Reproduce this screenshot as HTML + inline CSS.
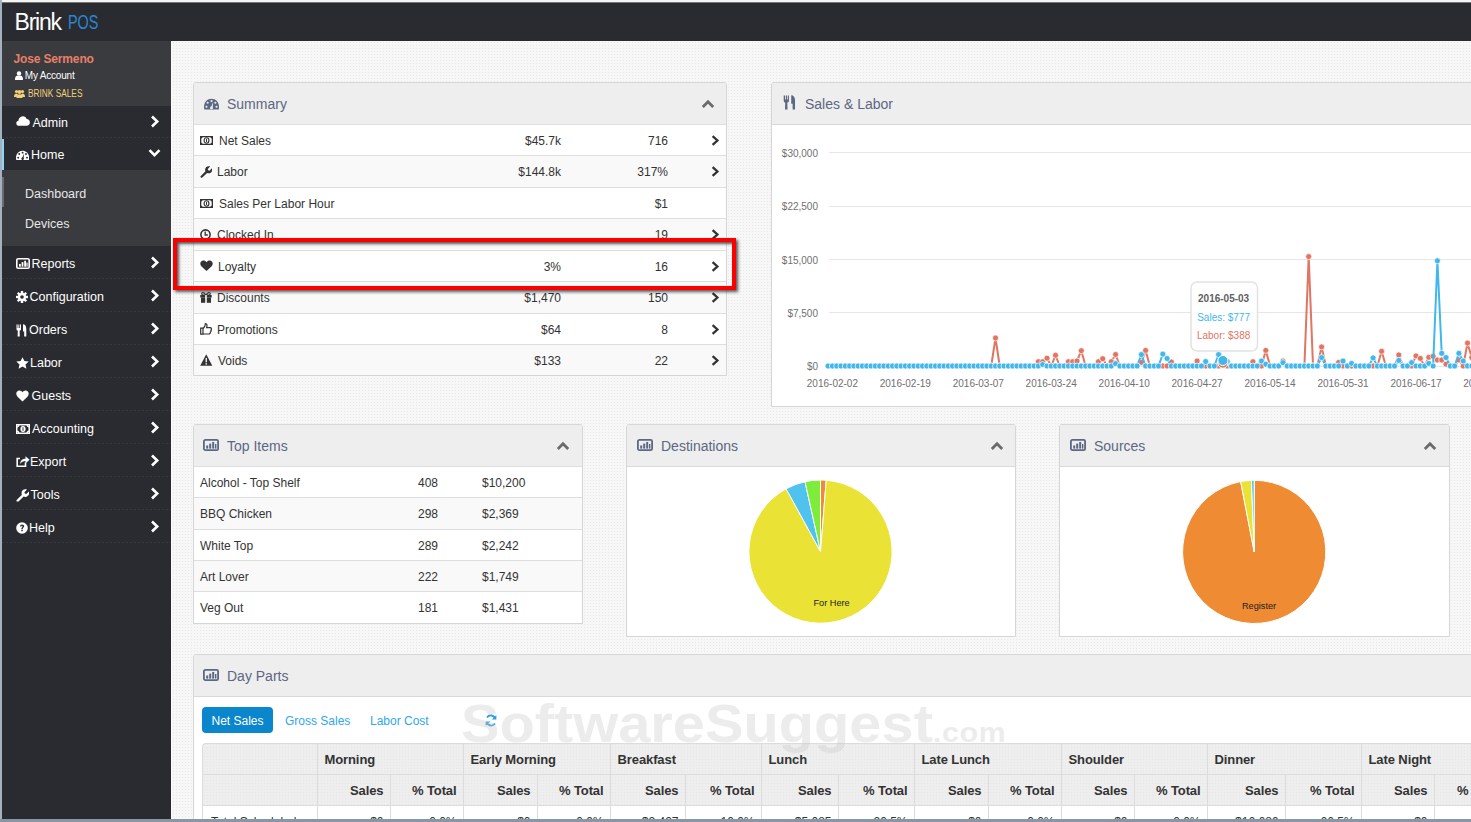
<!DOCTYPE html>
<html><head><meta charset="utf-8">
<style>
*{box-sizing:border-box;margin:0;padding:0}
html,body{width:1471px;height:822px;overflow:hidden}
body{position:relative;background:#f3f3f3;font-family:"Liberation Sans",sans-serif;color:#333}
.abs{position:absolute}
#topstrip{left:0;top:0;width:1471px;height:3px;background:#f4f4f4;border-bottom:1px solid #777}
#leftstrip{left:0;top:0;width:2px;height:822px;background:#a4b1bf}
#botstrip{left:0;top:819px;width:1471px;height:3px;background:#8797a6}
#header{left:2px;top:3px;width:1469px;height:38px;background:#2a2b30}
#content{left:171px;top:41px;width:1300px;height:779px;background-color:#f7f7f7;
 background-image:radial-gradient(#e8e8e8 0.6px,transparent 0.8px);background-size:3px 3px;border-left:1px solid #fafafa}
#sidebar{left:2px;top:41px;width:169px;height:779px;background:#2a2b30}
#user{left:0;top:0;width:169px;height:65px;background:#3a3b3f}
.logo1{left:12.5px;top:4.5px;font-size:23px;color:#fff;letter-spacing:-1.2px;line-height:28px}
.logo2{left:65.5px;top:8px;font-size:19.5px;color:#2a86d1;line-height:22px;transform:scaleX(0.74);transform-origin:0 0}
.menu{position:absolute;left:0;width:169px;height:33px;color:#fff;font-size:12.5px;
 background-image:linear-gradient(90deg,#38393e 50%,transparent 50%);background-size:4px 1px;background-repeat:repeat-x;background-position:0 100%}
.menu .t{position:absolute;top:10px;line-height:16px;white-space:nowrap}
.menu svg.ic{position:absolute;left:14px}
.menu svg.chev{position:absolute;left:147px;top:10px}
.sub{position:absolute;left:0;top:129px;width:169px;height:76px;background:#3a3b3f}
.sub .t{position:absolute;left:23px;color:#e8e8e8;font-size:12.5px;line-height:16px}

.panel{position:absolute;background:#fff;border:1px solid #d6d6d6;border-radius:3px 3px 0 0}
.ph{position:absolute;left:0;top:0;right:0;height:42px;background:#eeeeee;border-bottom:1px solid #d9d9d9;border-radius:2px 2px 0 0}
.ph .ttl{position:absolute;top:13px;font-size:14px;color:#5c6783;line-height:16px;white-space:nowrap}
.ph svg{position:absolute}
.row{position:absolute;left:0;right:0;border-top:1px solid #dedede;font-size:12px;color:#333;line-height:14px;white-space:nowrap}
.row.alt{background:#f9f9f9}
.row .l{position:absolute}
.row .v1{position:absolute;right:165px;text-align:right}
.row .v2{position:absolute;right:58px;text-align:right}
.row svg{position:absolute}

.dph{background-color:#eeeeee;background-image:radial-gradient(#e6e6e6 0.6px,transparent 0.8px);background-size:3px 3px}
.dpt{font-size:13px;letter-spacing:-0.1px;font-weight:bold;color:#333;line-height:15px;white-space:nowrap}
.dpd{font-size:12px;color:#333;line-height:15px;white-space:nowrap}
.btn{position:absolute;left:202px;top:707px;width:71px;height:26px;background:#0a86cd;border-radius:4px;color:#fff;font-size:12px;line-height:29px;text-align:center}
.lnk{position:absolute;top:713.5px;font-size:12px;color:#2fa7ec;line-height:15px;white-space:nowrap}
.wm{position:absolute;left:461px;top:694px;font-size:53px;font-weight:bold;color:rgba(200,200,200,0.35);line-height:60px;white-space:nowrap;transform:scaleX(1.09);transform-origin:0 0}
</style></head>
<body>
<div id="topstrip" class="abs"></div>
<div id="header" class="abs">
  <div class="abs logo1">Brink</div>
  <div class="abs logo2">POS</div>
</div>
<div id="content" class="abs"></div>
<div class="panel" style="left:193px;top:82px;width:534px;height:294px">
<div class="ph"><svg style="left:10px;top:15px" width="15" height="12" viewBox="0 0 14 11"><path d="M0.3 10.6 C0.1 10 0 9.2 0 8.3 C0 4 3.1 0.7 7 0.7 C10.9 0.7 14 4 14 8.3 C14 9.2 13.9 10 13.7 10.6 Z" fill="#5c6783"/><circle cx="2.3" cy="8.1" r="1" fill="#eee"/><circle cx="3.4" cy="4.3" r="1" fill="#eee"/><circle cx="7" cy="2.8" r="1" fill="#eee"/><circle cx="10.6" cy="4.3" r="1" fill="#eee"/><circle cx="11.7" cy="8.1" r="1" fill="#eee"/><path d="M6 9.4 L8.6 3.6 L8 9.4 Z" fill="#eee"/><circle cx="7" cy="9.2" r="1.3" fill="#eee"/></svg><span class="ttl" style="left:33px">Summary</span><svg style="left:507px;top:16px" width="14" height="10" viewBox="0 0 14 10"><path d="M1.8 8 L7 2.8 L12.2 8" stroke="#6b6b6b" stroke-width="2.8" fill="none"/></svg></div>
<div class="row" style="top:41.0px;height:31.4px"><svg style="left:6px;top:11px" width="13" height="9" viewBox="0 0 14 10" preserveAspectRatio="none"><rect x="0.7" y="0.7" width="12.6" height="8.6" fill="none" stroke="#333" stroke-width="1.4"/><path d="M0.7 2.8 A2.1 2.1 0 0 0 2.8 0.7 L0.7 0.7Z M11.2 0.7 A2.1 2.1 0 0 0 13.3 2.8 L13.3 0.7Z M13.3 7.2 A2.1 2.1 0 0 0 11.2 9.3 L13.3 9.3Z M2.8 9.3 A2.1 2.1 0 0 0 0.7 7.2 L0.7 9.3Z" fill="#333"/><ellipse cx="7" cy="5" rx="2.6" ry="3" fill="none" stroke="#333" stroke-width="1.2"/><rect x="6.5" y="3.3" width="1.1" height="3.4" fill="#333"/></svg><span class="l" style="left:25px;top:9px">Net Sales</span><span class="v1" style="top:9px">$45.7k</span><span class="v2" style="top:9px">716</span><svg style="left:517px;top:10px" width="9" height="11" viewBox="0 0 9 11"><path d="M1.6 1.2 L6.4 5.5 L1.6 9.8" stroke="#333" stroke-width="2.3" fill="none"/></svg></div>
<div class="row alt" style="top:72.4px;height:31.6px"><svg style="left:6px;top:10px" width="12" height="12" viewBox="0 0 13 13"><path d="M1.3 12.6 C0.8 12.6 0.4 12.2 0.4 11.7 C0.4 11.4 0.5 11.2 0.7 11 L5.9 5.8 C5.6 5.2 5.5 4.6 5.5 4 C5.5 1.9 7.2 0.2 9.3 0.2 C9.9 0.2 10.5 0.4 11 0.6 L8.4 3.2 L8.9 4.6 L10.3 5.1 L12.9 2.5 C13.1 3 13.2 3.5 13.2 4.1 C13.2 6.2 11.5 7.9 9.4 7.9 C8.8 7.9 8.2 7.8 7.7 7.5 L2.5 12.5 C2.3 12.7 2 12.6 1.3 12.6 Z" fill="#333"/></svg><span class="l" style="left:23px;top:9px">Labor</span><span class="v1" style="top:9px">$144.8k</span><span class="v2" style="top:9px">317%</span><svg style="left:517px;top:10px" width="9" height="11" viewBox="0 0 9 11"><path d="M1.6 1.2 L6.4 5.5 L1.6 9.8" stroke="#333" stroke-width="2.3" fill="none"/></svg></div>
<div class="row" style="top:104.0px;height:31.2px"><svg style="left:6px;top:11px" width="13" height="9" viewBox="0 0 14 10" preserveAspectRatio="none"><rect x="0.7" y="0.7" width="12.6" height="8.6" fill="none" stroke="#333" stroke-width="1.4"/><path d="M0.7 2.8 A2.1 2.1 0 0 0 2.8 0.7 L0.7 0.7Z M11.2 0.7 A2.1 2.1 0 0 0 13.3 2.8 L13.3 0.7Z M13.3 7.2 A2.1 2.1 0 0 0 11.2 9.3 L13.3 9.3Z M2.8 9.3 A2.1 2.1 0 0 0 0.7 7.2 L0.7 9.3Z" fill="#333"/><ellipse cx="7" cy="5" rx="2.6" ry="3" fill="none" stroke="#333" stroke-width="1.2"/><rect x="6.5" y="3.3" width="1.1" height="3.4" fill="#333"/></svg><span class="l" style="left:25px;top:9px">Sales Per Labor Hour</span><span class="v1" style="top:9px"></span><span class="v2" style="top:9px">$1</span></div>
<div class="row alt" style="top:135.2px;height:31.3px"><svg style="left:6px;top:10px" width="11" height="11" viewBox="0 0 11 11"><circle cx="5.5" cy="5.5" r="4.6" fill="none" stroke="#333" stroke-width="1.6"/><path d="M5.2 2.6 L5.2 6 L7.8 6" fill="none" stroke="#333" stroke-width="1.3"/></svg><span class="l" style="left:23px;top:9px">Clocked In</span><span class="v1" style="top:9px"></span><span class="v2" style="top:9px">19</span><svg style="left:517px;top:10px" width="9" height="11" viewBox="0 0 9 11"><path d="M1.6 1.2 L6.4 5.5 L1.6 9.8" stroke="#333" stroke-width="2.3" fill="none"/></svg></div>
<div class="row" style="top:166.5px;height:31.5px"><svg style="left:5.5px;top:9.5px" width="13" height="11.5" viewBox="0 0 13 12" preserveAspectRatio="none"><path d="M6.5 11.5 L1.3 6.4 C-0.3 4.8 0 1.6 2.3 0.8 C4 0.2 5.6 1 6.5 2.3 C7.4 1 9 0.2 10.7 0.8 C13 1.6 13.3 4.8 11.7 6.4 Z" fill="#333"/></svg><span class="l" style="left:24px;top:9px">Loyalty</span><span class="v1" style="top:9px">3%</span><span class="v2" style="top:9px">16</span><svg style="left:517px;top:10px" width="9" height="11" viewBox="0 0 9 11"><path d="M1.6 1.2 L6.4 5.5 L1.6 9.8" stroke="#333" stroke-width="2.3" fill="none"/></svg></div>
<div class="row alt" style="top:198.0px;height:31.5px"><svg style="left:6px;top:10px" width="12" height="11" viewBox="0 0 12 11"><path d="M3 3 C1.5 3 1.2 1 2.6 0.7 C4 0.4 5.3 1.8 6 3 C6.7 1.8 8 0.4 9.4 0.7 C10.8 1 10.5 3 9 3Z" fill="none" stroke="#333" stroke-width="1.1"/><rect x="0.3" y="3" width="11.4" height="2.6" fill="#333"/><rect x="1" y="5.6" width="10" height="5.2" fill="#333"/><rect x="5.2" y="3" width="1.6" height="8" fill="#f9f9f9"/></svg><span class="l" style="left:23px;top:9px">Discounts</span><span class="v1" style="top:9px">$1,470</span><span class="v2" style="top:9px">150</span><svg style="left:517px;top:10px" width="9" height="11" viewBox="0 0 9 11"><path d="M1.6 1.2 L6.4 5.5 L1.6 9.8" stroke="#333" stroke-width="2.3" fill="none"/></svg></div>
<div class="row" style="top:229.5px;height:31.0px"><svg style="left:6px;top:9px" width="12" height="12" viewBox="0 0 12 12"><path d="M0.7 5.2 L3 5.2 L3 11.2 L0.7 11.2Z" fill="none" stroke="#333" stroke-width="1.2"/><path d="M3 5.4 C4.5 4.3 5.3 2.7 5.4 0.7 C7 0.7 7.4 2.3 6.6 4.6 L10.3 4.6 C11.2 4.6 11.6 5.4 11.2 6.1 C11.6 6.6 11.4 7.4 10.9 7.7 C11.1 8.3 10.8 9 10.3 9.2 C10.4 10 9.9 11 9 11 L3 11" fill="none" stroke="#333" stroke-width="1.2"/></svg><span class="l" style="left:23px;top:9px">Promotions</span><span class="v1" style="top:9px">$64</span><span class="v2" style="top:9px">8</span><svg style="left:517px;top:10px" width="9" height="11" viewBox="0 0 9 11"><path d="M1.6 1.2 L6.4 5.5 L1.6 9.8" stroke="#333" stroke-width="2.3" fill="none"/></svg></div>
<div class="row alt" style="top:260.5px;height:31.5px"><svg style="left:6px;top:9px" width="12.5" height="12" viewBox="0 0 13 11" preserveAspectRatio="none"><path d="M6.5 0.3 L12.8 10.8 L0.2 10.8Z" fill="#333"/><rect x="5.8" y="3.6" width="1.4" height="4" fill="#f9f9f9"/><rect x="5.8" y="8.4" width="1.4" height="1.4" fill="#f9f9f9"/></svg><span class="l" style="left:24px;top:9px">Voids</span><span class="v1" style="top:9px">$133</span><span class="v2" style="top:9px">22</span><svg style="left:517px;top:10px" width="9" height="11" viewBox="0 0 9 11"><path d="M1.6 1.2 L6.4 5.5 L1.6 9.8" stroke="#333" stroke-width="2.3" fill="none"/></svg></div>
</div>

<div class="panel" style="left:771px;top:82px;width:720px;height:325px">
<div class="ph"><svg style="left:11px;top:12px" width="13" height="15" viewBox="0 0 11 13"><path d="M0.5 0.5 L1.6 0.5 L1.6 4 L2.3 4 L2.3 0.5 L3.3 0.5 L3.3 4 L4 4 L4 0.5 L5 0.5 L5 5.2 C5 6 4.4 6.4 3.6 6.6 L3.8 12.5 L1.6 12.5 L1.8 6.6 C1 6.4 0.5 6 0.5 5.2 Z" fill="#5c6783"/><path d="M7 0.3 C9 0.3 10.3 2 10.3 5 L10.3 12.5 L8.2 12.5 L8.2 7.6 L7 7.6 Z" fill="#5c6783"/></svg><span class="ttl" style="left:33px">Sales &amp; Labor</span></div></div>
<svg class="abs" style="left:772px;top:125px" width="699" height="281" viewBox="772 125 699 281">
<line x1="829" y1="366.5" x2="1471" y2="366.5" stroke="#e6e6e6" stroke-width="1"/>
<text x="818" y="370.4" text-anchor="end" font-size="10" fill="#707070">$0</text>
<line x1="829" y1="312.5" x2="1471" y2="312.5" stroke="#e6e6e6" stroke-width="1"/>
<text x="818" y="317.1" text-anchor="end" font-size="10" fill="#707070">$7,500</text>
<line x1="829" y1="259.5" x2="1471" y2="259.5" stroke="#e6e6e6" stroke-width="1"/>
<text x="818" y="263.7" text-anchor="end" font-size="10" fill="#707070">$15,000</text>
<line x1="829" y1="206.5" x2="1471" y2="206.5" stroke="#e6e6e6" stroke-width="1"/>
<text x="818" y="210.4" text-anchor="end" font-size="10" fill="#707070">$22,500</text>
<line x1="829" y1="152.5" x2="1471" y2="152.5" stroke="#e6e6e6" stroke-width="1"/>
<text x="818" y="157.1" text-anchor="end" font-size="10" fill="#707070">$30,000</text>
<text x="832.4" y="386.9" text-anchor="middle" font-size="10" fill="#707070">2016-02-02</text>
<text x="905.3" y="386.9" text-anchor="middle" font-size="10" fill="#707070">2016-02-19</text>
<text x="978.3" y="386.9" text-anchor="middle" font-size="10" fill="#707070">2016-03-07</text>
<text x="1051.2" y="386.9" text-anchor="middle" font-size="10" fill="#707070">2016-03-24</text>
<text x="1124.2" y="386.9" text-anchor="middle" font-size="10" fill="#707070">2016-04-10</text>
<text x="1197.1" y="386.9" text-anchor="middle" font-size="10" fill="#707070">2016-04-27</text>
<text x="1270.1" y="386.9" text-anchor="middle" font-size="10" fill="#707070">2016-05-14</text>
<text x="1343.0" y="386.9" text-anchor="middle" font-size="10" fill="#707070">2016-05-31</text>
<text x="1416.0" y="386.9" text-anchor="middle" font-size="10" fill="#707070">2016-06-17</text>
<text x="1488.9" y="386.9" text-anchor="middle" font-size="10" fill="#707070">2016-07-04</text>
<path d="M828.1 366.0 L832.4 366.0 L836.7 366.0 L841.0 366.0 L845.3 366.0 L849.6 366.0 L853.9 366.0 L858.1 366.0 L862.4 366.0 L866.7 366.0 L871.0 366.0 L875.3 366.0 L879.6 366.0 L883.9 366.0 L888.2 366.0 L892.5 366.0 L896.8 366.0 L901.1 366.0 L905.3 366.0 L909.6 366.0 L913.9 366.0 L918.2 366.0 L922.5 366.0 L926.8 366.0 L931.1 366.0 L935.4 366.0 L939.7 366.0 L944.0 366.0 L948.3 366.0 L952.5 366.0 L956.8 366.0 L961.1 366.0 L965.4 366.0 L969.7 366.0 L974.0 366.0 L978.3 366.0 L982.6 366.0 L986.9 366.0 L991.2 366.0 L995.5 338.0 L999.7 366.0 L1004.0 366.0 L1008.3 366.0 L1012.6 366.0 L1016.9 366.0 L1021.2 366.0 L1025.5 366.0 L1029.8 366.0 L1034.1 366.0 L1038.4 361.7 L1042.7 361.7 L1047.0 358.2 L1051.2 366.0 L1055.5 355.3 L1059.8 366.0 L1064.1 366.0 L1068.4 361.7 L1072.7 361.7 L1077.0 361.0 L1081.3 350.7 L1085.6 366.0 L1089.9 366.0 L1094.2 366.0 L1098.4 361.7 L1102.7 358.7 L1107.0 366.0 L1111.3 361.7 L1115.6 354.5 L1119.9 366.0 L1124.2 366.0 L1128.5 366.0 L1132.8 366.0 L1137.1 366.0 L1141.4 362.4 L1145.6 350.4 L1149.9 366.0 L1154.2 366.0 L1158.5 366.0 L1162.8 366.0 L1167.1 366.0 L1171.4 362.0 L1175.7 366.0 L1180.0 366.0 L1184.3 366.0 L1188.6 366.0 L1192.8 366.0 L1197.1 361.0 L1201.4 366.0 L1205.7 366.0 L1210.0 366.0 L1214.3 366.0 L1218.6 366.0 L1222.9 363.2 L1227.2 366.0 L1231.5 366.0 L1235.8 366.0 L1240.0 366.0 L1244.3 366.0 L1248.6 366.0 L1252.9 361.7 L1257.2 366.0 L1261.5 366.0 L1265.8 350.4 L1270.1 366.0 L1274.4 366.0 L1278.7 366.0 L1283.0 361.0 L1287.2 366.0 L1291.5 366.0 L1295.8 366.0 L1300.1 366.0 L1304.4 366.0 L1308.7 256.6 L1313.0 366.0 L1317.3 366.0 L1321.6 346.9 L1325.9 366.0 L1330.2 366.0 L1334.4 366.0 L1338.7 362.4 L1343.0 366.0 L1347.3 366.0 L1351.6 366.0 L1355.9 366.0 L1360.2 366.0 L1364.5 366.0 L1368.8 366.0 L1373.1 366.0 L1377.4 366.0 L1381.6 351.3 L1385.9 366.0 L1390.2 366.0 L1394.5 366.0 L1398.8 354.9 L1403.1 366.0 L1407.4 366.0 L1411.7 366.0 L1416.0 355.9 L1420.3 358.4 L1424.6 366.0 L1428.8 357.3 L1433.1 356.3 L1437.4 360.0 L1441.7 360.0 L1446.0 364.2 L1450.3 366.0 L1454.6 366.0 L1458.9 360.0 L1463.2 366.0 L1467.5 343.1 L1471.8 357.5 L1476.1 366.0 L1480.3 366.0" fill="none" stroke="#e07561" stroke-width="2" stroke-linejoin="round"/>
<circle cx="828.1" cy="366.0" r="3" fill="#e07561" stroke="#fff" stroke-width="0.7"/>
<circle cx="832.4" cy="366.0" r="3" fill="#e07561" stroke="#fff" stroke-width="0.7"/>
<circle cx="836.7" cy="366.0" r="3" fill="#e07561" stroke="#fff" stroke-width="0.7"/>
<circle cx="841.0" cy="366.0" r="3" fill="#e07561" stroke="#fff" stroke-width="0.7"/>
<circle cx="845.3" cy="366.0" r="3" fill="#e07561" stroke="#fff" stroke-width="0.7"/>
<circle cx="849.6" cy="366.0" r="3" fill="#e07561" stroke="#fff" stroke-width="0.7"/>
<circle cx="853.9" cy="366.0" r="3" fill="#e07561" stroke="#fff" stroke-width="0.7"/>
<circle cx="858.1" cy="366.0" r="3" fill="#e07561" stroke="#fff" stroke-width="0.7"/>
<circle cx="862.4" cy="366.0" r="3" fill="#e07561" stroke="#fff" stroke-width="0.7"/>
<circle cx="866.7" cy="366.0" r="3" fill="#e07561" stroke="#fff" stroke-width="0.7"/>
<circle cx="871.0" cy="366.0" r="3" fill="#e07561" stroke="#fff" stroke-width="0.7"/>
<circle cx="875.3" cy="366.0" r="3" fill="#e07561" stroke="#fff" stroke-width="0.7"/>
<circle cx="879.6" cy="366.0" r="3" fill="#e07561" stroke="#fff" stroke-width="0.7"/>
<circle cx="883.9" cy="366.0" r="3" fill="#e07561" stroke="#fff" stroke-width="0.7"/>
<circle cx="888.2" cy="366.0" r="3" fill="#e07561" stroke="#fff" stroke-width="0.7"/>
<circle cx="892.5" cy="366.0" r="3" fill="#e07561" stroke="#fff" stroke-width="0.7"/>
<circle cx="896.8" cy="366.0" r="3" fill="#e07561" stroke="#fff" stroke-width="0.7"/>
<circle cx="901.1" cy="366.0" r="3" fill="#e07561" stroke="#fff" stroke-width="0.7"/>
<circle cx="905.3" cy="366.0" r="3" fill="#e07561" stroke="#fff" stroke-width="0.7"/>
<circle cx="909.6" cy="366.0" r="3" fill="#e07561" stroke="#fff" stroke-width="0.7"/>
<circle cx="913.9" cy="366.0" r="3" fill="#e07561" stroke="#fff" stroke-width="0.7"/>
<circle cx="918.2" cy="366.0" r="3" fill="#e07561" stroke="#fff" stroke-width="0.7"/>
<circle cx="922.5" cy="366.0" r="3" fill="#e07561" stroke="#fff" stroke-width="0.7"/>
<circle cx="926.8" cy="366.0" r="3" fill="#e07561" stroke="#fff" stroke-width="0.7"/>
<circle cx="931.1" cy="366.0" r="3" fill="#e07561" stroke="#fff" stroke-width="0.7"/>
<circle cx="935.4" cy="366.0" r="3" fill="#e07561" stroke="#fff" stroke-width="0.7"/>
<circle cx="939.7" cy="366.0" r="3" fill="#e07561" stroke="#fff" stroke-width="0.7"/>
<circle cx="944.0" cy="366.0" r="3" fill="#e07561" stroke="#fff" stroke-width="0.7"/>
<circle cx="948.3" cy="366.0" r="3" fill="#e07561" stroke="#fff" stroke-width="0.7"/>
<circle cx="952.5" cy="366.0" r="3" fill="#e07561" stroke="#fff" stroke-width="0.7"/>
<circle cx="956.8" cy="366.0" r="3" fill="#e07561" stroke="#fff" stroke-width="0.7"/>
<circle cx="961.1" cy="366.0" r="3" fill="#e07561" stroke="#fff" stroke-width="0.7"/>
<circle cx="965.4" cy="366.0" r="3" fill="#e07561" stroke="#fff" stroke-width="0.7"/>
<circle cx="969.7" cy="366.0" r="3" fill="#e07561" stroke="#fff" stroke-width="0.7"/>
<circle cx="974.0" cy="366.0" r="3" fill="#e07561" stroke="#fff" stroke-width="0.7"/>
<circle cx="978.3" cy="366.0" r="3" fill="#e07561" stroke="#fff" stroke-width="0.7"/>
<circle cx="982.6" cy="366.0" r="3" fill="#e07561" stroke="#fff" stroke-width="0.7"/>
<circle cx="986.9" cy="366.0" r="3" fill="#e07561" stroke="#fff" stroke-width="0.7"/>
<circle cx="991.2" cy="366.0" r="3" fill="#e07561" stroke="#fff" stroke-width="0.7"/>
<circle cx="995.5" cy="338.0" r="3" fill="#e07561" stroke="#fff" stroke-width="0.7"/>
<circle cx="999.7" cy="366.0" r="3" fill="#e07561" stroke="#fff" stroke-width="0.7"/>
<circle cx="1004.0" cy="366.0" r="3" fill="#e07561" stroke="#fff" stroke-width="0.7"/>
<circle cx="1008.3" cy="366.0" r="3" fill="#e07561" stroke="#fff" stroke-width="0.7"/>
<circle cx="1012.6" cy="366.0" r="3" fill="#e07561" stroke="#fff" stroke-width="0.7"/>
<circle cx="1016.9" cy="366.0" r="3" fill="#e07561" stroke="#fff" stroke-width="0.7"/>
<circle cx="1021.2" cy="366.0" r="3" fill="#e07561" stroke="#fff" stroke-width="0.7"/>
<circle cx="1025.5" cy="366.0" r="3" fill="#e07561" stroke="#fff" stroke-width="0.7"/>
<circle cx="1029.8" cy="366.0" r="3" fill="#e07561" stroke="#fff" stroke-width="0.7"/>
<circle cx="1034.1" cy="366.0" r="3" fill="#e07561" stroke="#fff" stroke-width="0.7"/>
<circle cx="1038.4" cy="361.7" r="3" fill="#e07561" stroke="#fff" stroke-width="0.7"/>
<circle cx="1042.7" cy="361.7" r="3" fill="#e07561" stroke="#fff" stroke-width="0.7"/>
<circle cx="1047.0" cy="358.2" r="3" fill="#e07561" stroke="#fff" stroke-width="0.7"/>
<circle cx="1051.2" cy="366.0" r="3" fill="#e07561" stroke="#fff" stroke-width="0.7"/>
<circle cx="1055.5" cy="355.3" r="3" fill="#e07561" stroke="#fff" stroke-width="0.7"/>
<circle cx="1059.8" cy="366.0" r="3" fill="#e07561" stroke="#fff" stroke-width="0.7"/>
<circle cx="1064.1" cy="366.0" r="3" fill="#e07561" stroke="#fff" stroke-width="0.7"/>
<circle cx="1068.4" cy="361.7" r="3" fill="#e07561" stroke="#fff" stroke-width="0.7"/>
<circle cx="1072.7" cy="361.7" r="3" fill="#e07561" stroke="#fff" stroke-width="0.7"/>
<circle cx="1077.0" cy="361.0" r="3" fill="#e07561" stroke="#fff" stroke-width="0.7"/>
<circle cx="1081.3" cy="350.7" r="3" fill="#e07561" stroke="#fff" stroke-width="0.7"/>
<circle cx="1085.6" cy="366.0" r="3" fill="#e07561" stroke="#fff" stroke-width="0.7"/>
<circle cx="1089.9" cy="366.0" r="3" fill="#e07561" stroke="#fff" stroke-width="0.7"/>
<circle cx="1094.2" cy="366.0" r="3" fill="#e07561" stroke="#fff" stroke-width="0.7"/>
<circle cx="1098.4" cy="361.7" r="3" fill="#e07561" stroke="#fff" stroke-width="0.7"/>
<circle cx="1102.7" cy="358.7" r="3" fill="#e07561" stroke="#fff" stroke-width="0.7"/>
<circle cx="1107.0" cy="366.0" r="3" fill="#e07561" stroke="#fff" stroke-width="0.7"/>
<circle cx="1111.3" cy="361.7" r="3" fill="#e07561" stroke="#fff" stroke-width="0.7"/>
<circle cx="1115.6" cy="354.5" r="3" fill="#e07561" stroke="#fff" stroke-width="0.7"/>
<circle cx="1119.9" cy="366.0" r="3" fill="#e07561" stroke="#fff" stroke-width="0.7"/>
<circle cx="1124.2" cy="366.0" r="3" fill="#e07561" stroke="#fff" stroke-width="0.7"/>
<circle cx="1128.5" cy="366.0" r="3" fill="#e07561" stroke="#fff" stroke-width="0.7"/>
<circle cx="1132.8" cy="366.0" r="3" fill="#e07561" stroke="#fff" stroke-width="0.7"/>
<circle cx="1137.1" cy="366.0" r="3" fill="#e07561" stroke="#fff" stroke-width="0.7"/>
<circle cx="1141.4" cy="362.4" r="3" fill="#e07561" stroke="#fff" stroke-width="0.7"/>
<circle cx="1145.6" cy="350.4" r="3" fill="#e07561" stroke="#fff" stroke-width="0.7"/>
<circle cx="1149.9" cy="366.0" r="3" fill="#e07561" stroke="#fff" stroke-width="0.7"/>
<circle cx="1154.2" cy="366.0" r="3" fill="#e07561" stroke="#fff" stroke-width="0.7"/>
<circle cx="1158.5" cy="366.0" r="3" fill="#e07561" stroke="#fff" stroke-width="0.7"/>
<circle cx="1162.8" cy="366.0" r="3" fill="#e07561" stroke="#fff" stroke-width="0.7"/>
<circle cx="1167.1" cy="366.0" r="3" fill="#e07561" stroke="#fff" stroke-width="0.7"/>
<circle cx="1171.4" cy="362.0" r="3" fill="#e07561" stroke="#fff" stroke-width="0.7"/>
<circle cx="1175.7" cy="366.0" r="3" fill="#e07561" stroke="#fff" stroke-width="0.7"/>
<circle cx="1180.0" cy="366.0" r="3" fill="#e07561" stroke="#fff" stroke-width="0.7"/>
<circle cx="1184.3" cy="366.0" r="3" fill="#e07561" stroke="#fff" stroke-width="0.7"/>
<circle cx="1188.6" cy="366.0" r="3" fill="#e07561" stroke="#fff" stroke-width="0.7"/>
<circle cx="1192.8" cy="366.0" r="3" fill="#e07561" stroke="#fff" stroke-width="0.7"/>
<circle cx="1197.1" cy="361.0" r="3" fill="#e07561" stroke="#fff" stroke-width="0.7"/>
<circle cx="1201.4" cy="366.0" r="3" fill="#e07561" stroke="#fff" stroke-width="0.7"/>
<circle cx="1205.7" cy="366.0" r="3" fill="#e07561" stroke="#fff" stroke-width="0.7"/>
<circle cx="1210.0" cy="366.0" r="3" fill="#e07561" stroke="#fff" stroke-width="0.7"/>
<circle cx="1214.3" cy="366.0" r="3" fill="#e07561" stroke="#fff" stroke-width="0.7"/>
<circle cx="1218.6" cy="366.0" r="3" fill="#e07561" stroke="#fff" stroke-width="0.7"/>
<circle cx="1222.9" cy="363.2" r="3" fill="#e07561" stroke="#fff" stroke-width="0.7"/>
<circle cx="1227.2" cy="366.0" r="3" fill="#e07561" stroke="#fff" stroke-width="0.7"/>
<circle cx="1231.5" cy="366.0" r="3" fill="#e07561" stroke="#fff" stroke-width="0.7"/>
<circle cx="1235.8" cy="366.0" r="3" fill="#e07561" stroke="#fff" stroke-width="0.7"/>
<circle cx="1240.0" cy="366.0" r="3" fill="#e07561" stroke="#fff" stroke-width="0.7"/>
<circle cx="1244.3" cy="366.0" r="3" fill="#e07561" stroke="#fff" stroke-width="0.7"/>
<circle cx="1248.6" cy="366.0" r="3" fill="#e07561" stroke="#fff" stroke-width="0.7"/>
<circle cx="1252.9" cy="361.7" r="3" fill="#e07561" stroke="#fff" stroke-width="0.7"/>
<circle cx="1257.2" cy="366.0" r="3" fill="#e07561" stroke="#fff" stroke-width="0.7"/>
<circle cx="1261.5" cy="366.0" r="3" fill="#e07561" stroke="#fff" stroke-width="0.7"/>
<circle cx="1265.8" cy="350.4" r="3" fill="#e07561" stroke="#fff" stroke-width="0.7"/>
<circle cx="1270.1" cy="366.0" r="3" fill="#e07561" stroke="#fff" stroke-width="0.7"/>
<circle cx="1274.4" cy="366.0" r="3" fill="#e07561" stroke="#fff" stroke-width="0.7"/>
<circle cx="1278.7" cy="366.0" r="3" fill="#e07561" stroke="#fff" stroke-width="0.7"/>
<circle cx="1283.0" cy="361.0" r="3" fill="#e07561" stroke="#fff" stroke-width="0.7"/>
<circle cx="1287.2" cy="366.0" r="3" fill="#e07561" stroke="#fff" stroke-width="0.7"/>
<circle cx="1291.5" cy="366.0" r="3" fill="#e07561" stroke="#fff" stroke-width="0.7"/>
<circle cx="1295.8" cy="366.0" r="3" fill="#e07561" stroke="#fff" stroke-width="0.7"/>
<circle cx="1300.1" cy="366.0" r="3" fill="#e07561" stroke="#fff" stroke-width="0.7"/>
<circle cx="1304.4" cy="366.0" r="3" fill="#e07561" stroke="#fff" stroke-width="0.7"/>
<circle cx="1308.7" cy="256.6" r="3" fill="#e07561" stroke="#fff" stroke-width="0.7"/>
<circle cx="1313.0" cy="366.0" r="3" fill="#e07561" stroke="#fff" stroke-width="0.7"/>
<circle cx="1317.3" cy="366.0" r="3" fill="#e07561" stroke="#fff" stroke-width="0.7"/>
<circle cx="1321.6" cy="346.9" r="3" fill="#e07561" stroke="#fff" stroke-width="0.7"/>
<circle cx="1325.9" cy="366.0" r="3" fill="#e07561" stroke="#fff" stroke-width="0.7"/>
<circle cx="1330.2" cy="366.0" r="3" fill="#e07561" stroke="#fff" stroke-width="0.7"/>
<circle cx="1334.4" cy="366.0" r="3" fill="#e07561" stroke="#fff" stroke-width="0.7"/>
<circle cx="1338.7" cy="362.4" r="3" fill="#e07561" stroke="#fff" stroke-width="0.7"/>
<circle cx="1343.0" cy="366.0" r="3" fill="#e07561" stroke="#fff" stroke-width="0.7"/>
<circle cx="1347.3" cy="366.0" r="3" fill="#e07561" stroke="#fff" stroke-width="0.7"/>
<circle cx="1351.6" cy="366.0" r="3" fill="#e07561" stroke="#fff" stroke-width="0.7"/>
<circle cx="1355.9" cy="366.0" r="3" fill="#e07561" stroke="#fff" stroke-width="0.7"/>
<circle cx="1360.2" cy="366.0" r="3" fill="#e07561" stroke="#fff" stroke-width="0.7"/>
<circle cx="1364.5" cy="366.0" r="3" fill="#e07561" stroke="#fff" stroke-width="0.7"/>
<circle cx="1368.8" cy="366.0" r="3" fill="#e07561" stroke="#fff" stroke-width="0.7"/>
<circle cx="1373.1" cy="366.0" r="3" fill="#e07561" stroke="#fff" stroke-width="0.7"/>
<circle cx="1377.4" cy="366.0" r="3" fill="#e07561" stroke="#fff" stroke-width="0.7"/>
<circle cx="1381.6" cy="351.3" r="3" fill="#e07561" stroke="#fff" stroke-width="0.7"/>
<circle cx="1385.9" cy="366.0" r="3" fill="#e07561" stroke="#fff" stroke-width="0.7"/>
<circle cx="1390.2" cy="366.0" r="3" fill="#e07561" stroke="#fff" stroke-width="0.7"/>
<circle cx="1394.5" cy="366.0" r="3" fill="#e07561" stroke="#fff" stroke-width="0.7"/>
<circle cx="1398.8" cy="354.9" r="3" fill="#e07561" stroke="#fff" stroke-width="0.7"/>
<circle cx="1403.1" cy="366.0" r="3" fill="#e07561" stroke="#fff" stroke-width="0.7"/>
<circle cx="1407.4" cy="366.0" r="3" fill="#e07561" stroke="#fff" stroke-width="0.7"/>
<circle cx="1411.7" cy="366.0" r="3" fill="#e07561" stroke="#fff" stroke-width="0.7"/>
<circle cx="1416.0" cy="355.9" r="3" fill="#e07561" stroke="#fff" stroke-width="0.7"/>
<circle cx="1420.3" cy="358.4" r="3" fill="#e07561" stroke="#fff" stroke-width="0.7"/>
<circle cx="1424.6" cy="366.0" r="3" fill="#e07561" stroke="#fff" stroke-width="0.7"/>
<circle cx="1428.8" cy="357.3" r="3" fill="#e07561" stroke="#fff" stroke-width="0.7"/>
<circle cx="1433.1" cy="356.3" r="3" fill="#e07561" stroke="#fff" stroke-width="0.7"/>
<circle cx="1437.4" cy="360.0" r="3" fill="#e07561" stroke="#fff" stroke-width="0.7"/>
<circle cx="1441.7" cy="360.0" r="3" fill="#e07561" stroke="#fff" stroke-width="0.7"/>
<circle cx="1446.0" cy="364.2" r="3" fill="#e07561" stroke="#fff" stroke-width="0.7"/>
<circle cx="1450.3" cy="366.0" r="3" fill="#e07561" stroke="#fff" stroke-width="0.7"/>
<circle cx="1454.6" cy="366.0" r="3" fill="#e07561" stroke="#fff" stroke-width="0.7"/>
<circle cx="1458.9" cy="360.0" r="3" fill="#e07561" stroke="#fff" stroke-width="0.7"/>
<circle cx="1463.2" cy="366.0" r="3" fill="#e07561" stroke="#fff" stroke-width="0.7"/>
<circle cx="1467.5" cy="343.1" r="3" fill="#e07561" stroke="#fff" stroke-width="0.7"/>
<circle cx="1471.8" cy="357.5" r="3" fill="#e07561" stroke="#fff" stroke-width="0.7"/>
<circle cx="1476.1" cy="366.0" r="3" fill="#e07561" stroke="#fff" stroke-width="0.7"/>
<circle cx="1480.3" cy="366.0" r="3" fill="#e07561" stroke="#fff" stroke-width="0.7"/>
<path d="M828.1 366.0 L832.4 366.0 L836.7 366.0 L841.0 366.0 L845.3 366.0 L849.6 366.0 L853.9 366.0 L858.1 366.0 L862.4 366.0 L866.7 366.0 L871.0 366.0 L875.3 366.0 L879.6 366.0 L883.9 366.0 L888.2 366.0 L892.5 366.0 L896.8 366.0 L901.1 366.0 L905.3 366.0 L909.6 366.0 L913.9 366.0 L918.2 366.0 L922.5 366.0 L926.8 366.0 L931.1 366.0 L935.4 366.0 L939.7 366.0 L944.0 366.0 L948.3 366.0 L952.5 366.0 L956.8 366.0 L961.1 366.0 L965.4 366.0 L969.7 366.0 L974.0 366.0 L978.3 366.0 L982.6 366.0 L986.9 366.0 L991.2 366.0 L995.5 366.0 L999.7 366.0 L1004.0 366.0 L1008.3 366.0 L1012.6 366.0 L1016.9 366.0 L1021.2 366.0 L1025.5 366.0 L1029.8 366.0 L1034.1 366.0 L1038.4 366.0 L1042.7 364.6 L1047.0 366.0 L1051.2 366.0 L1055.5 366.0 L1059.8 366.0 L1064.1 366.0 L1068.4 366.0 L1072.7 366.0 L1077.0 366.0 L1081.3 366.0 L1085.6 366.0 L1089.9 366.0 L1094.2 366.0 L1098.4 366.0 L1102.7 366.0 L1107.0 366.0 L1111.3 366.0 L1115.6 363.6 L1119.9 366.0 L1124.2 366.0 L1128.5 366.0 L1132.8 366.0 L1137.1 366.0 L1141.4 354.6 L1145.6 366.0 L1149.9 366.0 L1154.2 366.0 L1158.5 366.0 L1162.8 354.1 L1167.1 358.5 L1171.4 366.0 L1175.7 366.0 L1180.0 366.0 L1184.3 366.0 L1188.6 366.0 L1192.8 366.0 L1197.1 366.0 L1201.4 366.0 L1205.7 361.5 L1210.0 366.0 L1214.3 366.0 L1218.6 354.6 L1222.9 360.5 L1227.2 361.5 L1231.5 366.0 L1235.8 366.0 L1240.0 366.0 L1244.3 366.0 L1248.6 366.0 L1252.9 366.0 L1257.2 366.0 L1261.5 361.0 L1265.8 364.2 L1270.1 366.0 L1274.4 366.0 L1278.7 366.0 L1283.0 362.6 L1287.2 366.0 L1291.5 366.0 L1295.8 366.0 L1300.1 366.0 L1304.4 366.0 L1308.7 366.0 L1313.0 366.0 L1317.3 366.0 L1321.6 357.6 L1325.9 366.0 L1330.2 366.0 L1334.4 366.0 L1338.7 366.0 L1343.0 361.0 L1347.3 366.0 L1351.6 363.4 L1355.9 366.0 L1360.2 366.0 L1364.5 366.0 L1368.8 366.0 L1373.1 357.9 L1377.4 366.0 L1381.6 366.0 L1385.9 366.0 L1390.2 366.0 L1394.5 366.0 L1398.8 360.4 L1403.1 366.0 L1407.4 366.0 L1411.7 362.6 L1416.0 366.0 L1420.3 366.0 L1424.6 366.0 L1428.8 363.4 L1433.1 366.0 L1437.4 260.8 L1441.7 353.3 L1446.0 357.6 L1450.3 366.0 L1454.6 366.0 L1458.9 353.3 L1463.2 361.0 L1467.5 366.0 L1471.8 366.0 L1476.1 366.0 L1480.3 366.0" fill="none" stroke="#41b7ec" stroke-width="2" stroke-linejoin="round"/>
<circle cx="828.1" cy="366.0" r="3" fill="#41b7ec" stroke="#fff" stroke-width="0.7"/>
<circle cx="832.4" cy="366.0" r="3" fill="#41b7ec" stroke="#fff" stroke-width="0.7"/>
<circle cx="836.7" cy="366.0" r="3" fill="#41b7ec" stroke="#fff" stroke-width="0.7"/>
<circle cx="841.0" cy="366.0" r="3" fill="#41b7ec" stroke="#fff" stroke-width="0.7"/>
<circle cx="845.3" cy="366.0" r="3" fill="#41b7ec" stroke="#fff" stroke-width="0.7"/>
<circle cx="849.6" cy="366.0" r="3" fill="#41b7ec" stroke="#fff" stroke-width="0.7"/>
<circle cx="853.9" cy="366.0" r="3" fill="#41b7ec" stroke="#fff" stroke-width="0.7"/>
<circle cx="858.1" cy="366.0" r="3" fill="#41b7ec" stroke="#fff" stroke-width="0.7"/>
<circle cx="862.4" cy="366.0" r="3" fill="#41b7ec" stroke="#fff" stroke-width="0.7"/>
<circle cx="866.7" cy="366.0" r="3" fill="#41b7ec" stroke="#fff" stroke-width="0.7"/>
<circle cx="871.0" cy="366.0" r="3" fill="#41b7ec" stroke="#fff" stroke-width="0.7"/>
<circle cx="875.3" cy="366.0" r="3" fill="#41b7ec" stroke="#fff" stroke-width="0.7"/>
<circle cx="879.6" cy="366.0" r="3" fill="#41b7ec" stroke="#fff" stroke-width="0.7"/>
<circle cx="883.9" cy="366.0" r="3" fill="#41b7ec" stroke="#fff" stroke-width="0.7"/>
<circle cx="888.2" cy="366.0" r="3" fill="#41b7ec" stroke="#fff" stroke-width="0.7"/>
<circle cx="892.5" cy="366.0" r="3" fill="#41b7ec" stroke="#fff" stroke-width="0.7"/>
<circle cx="896.8" cy="366.0" r="3" fill="#41b7ec" stroke="#fff" stroke-width="0.7"/>
<circle cx="901.1" cy="366.0" r="3" fill="#41b7ec" stroke="#fff" stroke-width="0.7"/>
<circle cx="905.3" cy="366.0" r="3" fill="#41b7ec" stroke="#fff" stroke-width="0.7"/>
<circle cx="909.6" cy="366.0" r="3" fill="#41b7ec" stroke="#fff" stroke-width="0.7"/>
<circle cx="913.9" cy="366.0" r="3" fill="#41b7ec" stroke="#fff" stroke-width="0.7"/>
<circle cx="918.2" cy="366.0" r="3" fill="#41b7ec" stroke="#fff" stroke-width="0.7"/>
<circle cx="922.5" cy="366.0" r="3" fill="#41b7ec" stroke="#fff" stroke-width="0.7"/>
<circle cx="926.8" cy="366.0" r="3" fill="#41b7ec" stroke="#fff" stroke-width="0.7"/>
<circle cx="931.1" cy="366.0" r="3" fill="#41b7ec" stroke="#fff" stroke-width="0.7"/>
<circle cx="935.4" cy="366.0" r="3" fill="#41b7ec" stroke="#fff" stroke-width="0.7"/>
<circle cx="939.7" cy="366.0" r="3" fill="#41b7ec" stroke="#fff" stroke-width="0.7"/>
<circle cx="944.0" cy="366.0" r="3" fill="#41b7ec" stroke="#fff" stroke-width="0.7"/>
<circle cx="948.3" cy="366.0" r="3" fill="#41b7ec" stroke="#fff" stroke-width="0.7"/>
<circle cx="952.5" cy="366.0" r="3" fill="#41b7ec" stroke="#fff" stroke-width="0.7"/>
<circle cx="956.8" cy="366.0" r="3" fill="#41b7ec" stroke="#fff" stroke-width="0.7"/>
<circle cx="961.1" cy="366.0" r="3" fill="#41b7ec" stroke="#fff" stroke-width="0.7"/>
<circle cx="965.4" cy="366.0" r="3" fill="#41b7ec" stroke="#fff" stroke-width="0.7"/>
<circle cx="969.7" cy="366.0" r="3" fill="#41b7ec" stroke="#fff" stroke-width="0.7"/>
<circle cx="974.0" cy="366.0" r="3" fill="#41b7ec" stroke="#fff" stroke-width="0.7"/>
<circle cx="978.3" cy="366.0" r="3" fill="#41b7ec" stroke="#fff" stroke-width="0.7"/>
<circle cx="982.6" cy="366.0" r="3" fill="#41b7ec" stroke="#fff" stroke-width="0.7"/>
<circle cx="986.9" cy="366.0" r="3" fill="#41b7ec" stroke="#fff" stroke-width="0.7"/>
<circle cx="991.2" cy="366.0" r="3" fill="#41b7ec" stroke="#fff" stroke-width="0.7"/>
<circle cx="995.5" cy="366.0" r="3" fill="#41b7ec" stroke="#fff" stroke-width="0.7"/>
<circle cx="999.7" cy="366.0" r="3" fill="#41b7ec" stroke="#fff" stroke-width="0.7"/>
<circle cx="1004.0" cy="366.0" r="3" fill="#41b7ec" stroke="#fff" stroke-width="0.7"/>
<circle cx="1008.3" cy="366.0" r="3" fill="#41b7ec" stroke="#fff" stroke-width="0.7"/>
<circle cx="1012.6" cy="366.0" r="3" fill="#41b7ec" stroke="#fff" stroke-width="0.7"/>
<circle cx="1016.9" cy="366.0" r="3" fill="#41b7ec" stroke="#fff" stroke-width="0.7"/>
<circle cx="1021.2" cy="366.0" r="3" fill="#41b7ec" stroke="#fff" stroke-width="0.7"/>
<circle cx="1025.5" cy="366.0" r="3" fill="#41b7ec" stroke="#fff" stroke-width="0.7"/>
<circle cx="1029.8" cy="366.0" r="3" fill="#41b7ec" stroke="#fff" stroke-width="0.7"/>
<circle cx="1034.1" cy="366.0" r="3" fill="#41b7ec" stroke="#fff" stroke-width="0.7"/>
<circle cx="1038.4" cy="366.0" r="3" fill="#41b7ec" stroke="#fff" stroke-width="0.7"/>
<circle cx="1042.7" cy="364.6" r="3" fill="#41b7ec" stroke="#fff" stroke-width="0.7"/>
<circle cx="1047.0" cy="366.0" r="3" fill="#41b7ec" stroke="#fff" stroke-width="0.7"/>
<circle cx="1051.2" cy="366.0" r="3" fill="#41b7ec" stroke="#fff" stroke-width="0.7"/>
<circle cx="1055.5" cy="366.0" r="3" fill="#41b7ec" stroke="#fff" stroke-width="0.7"/>
<circle cx="1059.8" cy="366.0" r="3" fill="#41b7ec" stroke="#fff" stroke-width="0.7"/>
<circle cx="1064.1" cy="366.0" r="3" fill="#41b7ec" stroke="#fff" stroke-width="0.7"/>
<circle cx="1068.4" cy="366.0" r="3" fill="#41b7ec" stroke="#fff" stroke-width="0.7"/>
<circle cx="1072.7" cy="366.0" r="3" fill="#41b7ec" stroke="#fff" stroke-width="0.7"/>
<circle cx="1077.0" cy="366.0" r="3" fill="#41b7ec" stroke="#fff" stroke-width="0.7"/>
<circle cx="1081.3" cy="366.0" r="3" fill="#41b7ec" stroke="#fff" stroke-width="0.7"/>
<circle cx="1085.6" cy="366.0" r="3" fill="#41b7ec" stroke="#fff" stroke-width="0.7"/>
<circle cx="1089.9" cy="366.0" r="3" fill="#41b7ec" stroke="#fff" stroke-width="0.7"/>
<circle cx="1094.2" cy="366.0" r="3" fill="#41b7ec" stroke="#fff" stroke-width="0.7"/>
<circle cx="1098.4" cy="366.0" r="3" fill="#41b7ec" stroke="#fff" stroke-width="0.7"/>
<circle cx="1102.7" cy="366.0" r="3" fill="#41b7ec" stroke="#fff" stroke-width="0.7"/>
<circle cx="1107.0" cy="366.0" r="3" fill="#41b7ec" stroke="#fff" stroke-width="0.7"/>
<circle cx="1111.3" cy="366.0" r="3" fill="#41b7ec" stroke="#fff" stroke-width="0.7"/>
<circle cx="1115.6" cy="363.6" r="3" fill="#41b7ec" stroke="#fff" stroke-width="0.7"/>
<circle cx="1119.9" cy="366.0" r="3" fill="#41b7ec" stroke="#fff" stroke-width="0.7"/>
<circle cx="1124.2" cy="366.0" r="3" fill="#41b7ec" stroke="#fff" stroke-width="0.7"/>
<circle cx="1128.5" cy="366.0" r="3" fill="#41b7ec" stroke="#fff" stroke-width="0.7"/>
<circle cx="1132.8" cy="366.0" r="3" fill="#41b7ec" stroke="#fff" stroke-width="0.7"/>
<circle cx="1137.1" cy="366.0" r="3" fill="#41b7ec" stroke="#fff" stroke-width="0.7"/>
<circle cx="1141.4" cy="354.6" r="3" fill="#41b7ec" stroke="#fff" stroke-width="0.7"/>
<circle cx="1145.6" cy="366.0" r="3" fill="#41b7ec" stroke="#fff" stroke-width="0.7"/>
<circle cx="1149.9" cy="366.0" r="3" fill="#41b7ec" stroke="#fff" stroke-width="0.7"/>
<circle cx="1154.2" cy="366.0" r="3" fill="#41b7ec" stroke="#fff" stroke-width="0.7"/>
<circle cx="1158.5" cy="366.0" r="3" fill="#41b7ec" stroke="#fff" stroke-width="0.7"/>
<circle cx="1162.8" cy="354.1" r="3" fill="#41b7ec" stroke="#fff" stroke-width="0.7"/>
<circle cx="1167.1" cy="358.5" r="3" fill="#41b7ec" stroke="#fff" stroke-width="0.7"/>
<circle cx="1171.4" cy="366.0" r="3" fill="#41b7ec" stroke="#fff" stroke-width="0.7"/>
<circle cx="1175.7" cy="366.0" r="3" fill="#41b7ec" stroke="#fff" stroke-width="0.7"/>
<circle cx="1180.0" cy="366.0" r="3" fill="#41b7ec" stroke="#fff" stroke-width="0.7"/>
<circle cx="1184.3" cy="366.0" r="3" fill="#41b7ec" stroke="#fff" stroke-width="0.7"/>
<circle cx="1188.6" cy="366.0" r="3" fill="#41b7ec" stroke="#fff" stroke-width="0.7"/>
<circle cx="1192.8" cy="366.0" r="3" fill="#41b7ec" stroke="#fff" stroke-width="0.7"/>
<circle cx="1197.1" cy="366.0" r="3" fill="#41b7ec" stroke="#fff" stroke-width="0.7"/>
<circle cx="1201.4" cy="366.0" r="3" fill="#41b7ec" stroke="#fff" stroke-width="0.7"/>
<circle cx="1205.7" cy="361.5" r="3" fill="#41b7ec" stroke="#fff" stroke-width="0.7"/>
<circle cx="1210.0" cy="366.0" r="3" fill="#41b7ec" stroke="#fff" stroke-width="0.7"/>
<circle cx="1214.3" cy="366.0" r="3" fill="#41b7ec" stroke="#fff" stroke-width="0.7"/>
<circle cx="1218.6" cy="354.6" r="3" fill="#41b7ec" stroke="#fff" stroke-width="0.7"/>
<circle cx="1222.9" cy="360.5" r="3" fill="#41b7ec" stroke="#fff" stroke-width="0.7"/>
<circle cx="1227.2" cy="361.5" r="3" fill="#41b7ec" stroke="#fff" stroke-width="0.7"/>
<circle cx="1231.5" cy="366.0" r="3" fill="#41b7ec" stroke="#fff" stroke-width="0.7"/>
<circle cx="1235.8" cy="366.0" r="3" fill="#41b7ec" stroke="#fff" stroke-width="0.7"/>
<circle cx="1240.0" cy="366.0" r="3" fill="#41b7ec" stroke="#fff" stroke-width="0.7"/>
<circle cx="1244.3" cy="366.0" r="3" fill="#41b7ec" stroke="#fff" stroke-width="0.7"/>
<circle cx="1248.6" cy="366.0" r="3" fill="#41b7ec" stroke="#fff" stroke-width="0.7"/>
<circle cx="1252.9" cy="366.0" r="3" fill="#41b7ec" stroke="#fff" stroke-width="0.7"/>
<circle cx="1257.2" cy="366.0" r="3" fill="#41b7ec" stroke="#fff" stroke-width="0.7"/>
<circle cx="1261.5" cy="361.0" r="3" fill="#41b7ec" stroke="#fff" stroke-width="0.7"/>
<circle cx="1265.8" cy="364.2" r="3" fill="#41b7ec" stroke="#fff" stroke-width="0.7"/>
<circle cx="1270.1" cy="366.0" r="3" fill="#41b7ec" stroke="#fff" stroke-width="0.7"/>
<circle cx="1274.4" cy="366.0" r="3" fill="#41b7ec" stroke="#fff" stroke-width="0.7"/>
<circle cx="1278.7" cy="366.0" r="3" fill="#41b7ec" stroke="#fff" stroke-width="0.7"/>
<circle cx="1283.0" cy="362.6" r="3" fill="#41b7ec" stroke="#fff" stroke-width="0.7"/>
<circle cx="1287.2" cy="366.0" r="3" fill="#41b7ec" stroke="#fff" stroke-width="0.7"/>
<circle cx="1291.5" cy="366.0" r="3" fill="#41b7ec" stroke="#fff" stroke-width="0.7"/>
<circle cx="1295.8" cy="366.0" r="3" fill="#41b7ec" stroke="#fff" stroke-width="0.7"/>
<circle cx="1300.1" cy="366.0" r="3" fill="#41b7ec" stroke="#fff" stroke-width="0.7"/>
<circle cx="1304.4" cy="366.0" r="3" fill="#41b7ec" stroke="#fff" stroke-width="0.7"/>
<circle cx="1308.7" cy="366.0" r="3" fill="#41b7ec" stroke="#fff" stroke-width="0.7"/>
<circle cx="1313.0" cy="366.0" r="3" fill="#41b7ec" stroke="#fff" stroke-width="0.7"/>
<circle cx="1317.3" cy="366.0" r="3" fill="#41b7ec" stroke="#fff" stroke-width="0.7"/>
<circle cx="1321.6" cy="357.6" r="3" fill="#41b7ec" stroke="#fff" stroke-width="0.7"/>
<circle cx="1325.9" cy="366.0" r="3" fill="#41b7ec" stroke="#fff" stroke-width="0.7"/>
<circle cx="1330.2" cy="366.0" r="3" fill="#41b7ec" stroke="#fff" stroke-width="0.7"/>
<circle cx="1334.4" cy="366.0" r="3" fill="#41b7ec" stroke="#fff" stroke-width="0.7"/>
<circle cx="1338.7" cy="366.0" r="3" fill="#41b7ec" stroke="#fff" stroke-width="0.7"/>
<circle cx="1343.0" cy="361.0" r="3" fill="#41b7ec" stroke="#fff" stroke-width="0.7"/>
<circle cx="1347.3" cy="366.0" r="3" fill="#41b7ec" stroke="#fff" stroke-width="0.7"/>
<circle cx="1351.6" cy="363.4" r="3" fill="#41b7ec" stroke="#fff" stroke-width="0.7"/>
<circle cx="1355.9" cy="366.0" r="3" fill="#41b7ec" stroke="#fff" stroke-width="0.7"/>
<circle cx="1360.2" cy="366.0" r="3" fill="#41b7ec" stroke="#fff" stroke-width="0.7"/>
<circle cx="1364.5" cy="366.0" r="3" fill="#41b7ec" stroke="#fff" stroke-width="0.7"/>
<circle cx="1368.8" cy="366.0" r="3" fill="#41b7ec" stroke="#fff" stroke-width="0.7"/>
<circle cx="1373.1" cy="357.9" r="3" fill="#41b7ec" stroke="#fff" stroke-width="0.7"/>
<circle cx="1377.4" cy="366.0" r="3" fill="#41b7ec" stroke="#fff" stroke-width="0.7"/>
<circle cx="1381.6" cy="366.0" r="3" fill="#41b7ec" stroke="#fff" stroke-width="0.7"/>
<circle cx="1385.9" cy="366.0" r="3" fill="#41b7ec" stroke="#fff" stroke-width="0.7"/>
<circle cx="1390.2" cy="366.0" r="3" fill="#41b7ec" stroke="#fff" stroke-width="0.7"/>
<circle cx="1394.5" cy="366.0" r="3" fill="#41b7ec" stroke="#fff" stroke-width="0.7"/>
<circle cx="1398.8" cy="360.4" r="3" fill="#41b7ec" stroke="#fff" stroke-width="0.7"/>
<circle cx="1403.1" cy="366.0" r="3" fill="#41b7ec" stroke="#fff" stroke-width="0.7"/>
<circle cx="1407.4" cy="366.0" r="3" fill="#41b7ec" stroke="#fff" stroke-width="0.7"/>
<circle cx="1411.7" cy="362.6" r="3" fill="#41b7ec" stroke="#fff" stroke-width="0.7"/>
<circle cx="1416.0" cy="366.0" r="3" fill="#41b7ec" stroke="#fff" stroke-width="0.7"/>
<circle cx="1420.3" cy="366.0" r="3" fill="#41b7ec" stroke="#fff" stroke-width="0.7"/>
<circle cx="1424.6" cy="366.0" r="3" fill="#41b7ec" stroke="#fff" stroke-width="0.7"/>
<circle cx="1428.8" cy="363.4" r="3" fill="#41b7ec" stroke="#fff" stroke-width="0.7"/>
<circle cx="1433.1" cy="366.0" r="3" fill="#41b7ec" stroke="#fff" stroke-width="0.7"/>
<circle cx="1437.4" cy="260.8" r="3" fill="#41b7ec" stroke="#fff" stroke-width="0.7"/>
<circle cx="1441.7" cy="353.3" r="3" fill="#41b7ec" stroke="#fff" stroke-width="0.7"/>
<circle cx="1446.0" cy="357.6" r="3" fill="#41b7ec" stroke="#fff" stroke-width="0.7"/>
<circle cx="1450.3" cy="366.0" r="3" fill="#41b7ec" stroke="#fff" stroke-width="0.7"/>
<circle cx="1454.6" cy="366.0" r="3" fill="#41b7ec" stroke="#fff" stroke-width="0.7"/>
<circle cx="1458.9" cy="353.3" r="3" fill="#41b7ec" stroke="#fff" stroke-width="0.7"/>
<circle cx="1463.2" cy="361.0" r="3" fill="#41b7ec" stroke="#fff" stroke-width="0.7"/>
<circle cx="1467.5" cy="366.0" r="3" fill="#41b7ec" stroke="#fff" stroke-width="0.7"/>
<circle cx="1471.8" cy="366.0" r="3" fill="#41b7ec" stroke="#fff" stroke-width="0.7"/>
<circle cx="1476.1" cy="366.0" r="3" fill="#41b7ec" stroke="#fff" stroke-width="0.7"/>
<circle cx="1480.3" cy="366.0" r="3" fill="#41b7ec" stroke="#fff" stroke-width="0.7"/>
<circle cx="1222.9" cy="363.2" r="5" fill="#e07561" stroke="#fff" stroke-width="1"/>
<circle cx="1222.9" cy="360.5" r="5" fill="#41b7ec" stroke="#fff" stroke-width="1"/>
<rect x="1191" y="282" width="66.5" height="69" rx="6" fill="rgba(255,255,255,0.88)" stroke="#e2e2e2" stroke-width="1.5"/>
<text x="1223.6" y="301.8" text-anchor="middle" font-size="10" font-weight="bold" fill="#606060">2016-05-03</text>
<text x="1223.6" y="320.8" text-anchor="middle" font-size="10" fill="#41b7ec">Sales: $777</text>
<text x="1223.6" y="338.6" text-anchor="middle" font-size="10" fill="#e07561">Labor: $388</text>
</svg>
<div class="panel" style="left:193px;top:424px;width:390px;height:200px">
<div class="ph"><svg style="left:9px;top:14px" width="16" height="12" viewBox="0 0 16 13" preserveAspectRatio="none"><rect x="0.9" y="0.9" width="14.2" height="11.2" rx="1.5" fill="none" stroke="#5c6783" stroke-width="1.8"/><rect x="3.2" y="7" width="2" height="3.4" fill="#5c6783"/><rect x="6.2" y="5" width="2" height="5.4" fill="#5c6783"/><rect x="9.2" y="3.2" width="2" height="7.2" fill="#5c6783"/><rect x="12" y="5.4" width="1.4" height="5" fill="#5c6783"/></svg><span class="ttl" style="left:33px">Top Items</span><svg style="left:362px;top:16px" width="14" height="10" viewBox="0 0 14 10"><path d="M1.8 8 L7 2.8 L12.2 8" stroke="#6b6b6b" stroke-width="2.8" fill="none"/></svg></div>
<div class="row" style="top:41.0px;height:31.2px"><span class="l" style="left:6px;top:9px">Alcohol - Top Shelf</span><span class="l" style="left:224px;top:9px">408</span><span class="l" style="left:288px;top:9px">$10,200</span></div>
<div class="row alt" style="top:72.2px;height:32.0px"><span class="l" style="left:6px;top:9px">BBQ Chicken</span><span class="l" style="left:224px;top:9px">298</span><span class="l" style="left:288px;top:9px">$2,369</span></div>
<div class="row" style="top:104.2px;height:31.0px"><span class="l" style="left:6px;top:9px">White Top</span><span class="l" style="left:224px;top:9px">289</span><span class="l" style="left:288px;top:9px">$2,242</span></div>
<div class="row alt" style="top:135.2px;height:31.2px"><span class="l" style="left:6px;top:9px">Art Lover</span><span class="l" style="left:224px;top:9px">222</span><span class="l" style="left:288px;top:9px">$1,749</span></div>
<div class="row" style="top:166.4px;height:31.6px"><span class="l" style="left:6px;top:9px">Veg Out</span><span class="l" style="left:224px;top:9px">181</span><span class="l" style="left:288px;top:9px">$1,431</span></div>
</div>
<div class="panel" style="left:626px;top:424px;width:390px;height:213px">
<div class="ph"><svg style="left:10px;top:14px" width="16" height="12" viewBox="0 0 16 13" preserveAspectRatio="none"><rect x="0.9" y="0.9" width="14.2" height="11.2" rx="1.5" fill="none" stroke="#5c6783" stroke-width="1.8"/><rect x="3.2" y="7" width="2" height="3.4" fill="#5c6783"/><rect x="6.2" y="5" width="2" height="5.4" fill="#5c6783"/><rect x="9.2" y="3.2" width="2" height="7.2" fill="#5c6783"/><rect x="12" y="5.4" width="1.4" height="5" fill="#5c6783"/></svg><span class="ttl" style="left:34px">Destinations</span><svg style="left:363px;top:16px" width="14" height="10" viewBox="0 0 14 10"><path d="M1.8 8 L7 2.8 L12.2 8" stroke="#6b6b6b" stroke-width="2.8" fill="none"/></svg></div></div>
<div class="panel" style="left:1059px;top:424px;width:391px;height:213px">
<div class="ph"><svg style="left:10px;top:14px" width="16" height="12" viewBox="0 0 16 13" preserveAspectRatio="none"><rect x="0.9" y="0.9" width="14.2" height="11.2" rx="1.5" fill="none" stroke="#5c6783" stroke-width="1.8"/><rect x="3.2" y="7" width="2" height="3.4" fill="#5c6783"/><rect x="6.2" y="5" width="2" height="5.4" fill="#5c6783"/><rect x="9.2" y="3.2" width="2" height="7.2" fill="#5c6783"/><rect x="12" y="5.4" width="1.4" height="5" fill="#5c6783"/></svg><span class="ttl" style="left:34px">Sources</span><svg style="left:363px;top:16px" width="14" height="10" viewBox="0 0 14 10"><path d="M1.8 8 L7 2.8 L12.2 8" stroke="#6b6b6b" stroke-width="2.8" fill="none"/></svg></div></div>
<svg class="abs" style="left:627px;top:467px" width="388" height="169" viewBox="627 467 388 169">
<path d="M820.50 551.60 L820.50 480.00 A71.6 71.6 0 0 1 826.24 480.23 Z" fill="#ee8b33" stroke="#fff" stroke-width="1" stroke-linejoin="round"/>
<path d="M820.50 551.60 L826.24 480.23 A71.6 71.6 0 1 1 786.12 488.80 Z" fill="#eae335" stroke="#fff" stroke-width="1" stroke-linejoin="round"/>
<path d="M820.50 551.60 L786.12 488.80 A71.6 71.6 0 0 1 805.00 481.70 Z" fill="#4fc3ee" stroke="#fff" stroke-width="1" stroke-linejoin="round"/>
<path d="M820.50 551.60 L805.00 481.70 A71.6 71.6 0 0 1 820.50 480.00 Z" fill="#7eec3b" stroke="#fff" stroke-width="1" stroke-linejoin="round"/>
<text x="831.6" y="605.6" text-anchor="middle" font-size="9.2" fill="#222">For Here</text>
</svg>
<svg class="abs" style="left:1060px;top:467px" width="389" height="169" viewBox="1060 467 389 169">
<path d="M1254.20 551.90 L1254.20 480.30 A71.6 71.6 0 1 1 1240.66 481.59 Z" fill="#ee8b33" stroke="#fff" stroke-width="1" stroke-linejoin="round"/>
<path d="M1254.20 551.90 L1240.66 481.59 A71.6 71.6 0 0 1 1251.45 480.35 Z" fill="#eae335" stroke="#fff" stroke-width="1" stroke-linejoin="round"/>
<path d="M1254.20 551.90 L1251.45 480.35 A71.6 71.6 0 0 1 1254.20 480.30 Z" fill="#4fc3ee" stroke="#fff" stroke-width="1" stroke-linejoin="round"/>
<text x="1259" y="608.9" text-anchor="middle" font-size="9.2" fill="#222">Register</text>
</svg>

<div class="panel" style="left:193px;top:654px;width:1300px;height:200px">
<div class="ph"><svg style="left:9px;top:14px" width="16" height="12" viewBox="0 0 16 13" preserveAspectRatio="none"><rect x="0.9" y="0.9" width="14.2" height="11.2" rx="1.5" fill="none" stroke="#5c6783" stroke-width="1.8"/><rect x="3.2" y="7" width="2" height="3.4" fill="#5c6783"/><rect x="6.2" y="5" width="2" height="5.4" fill="#5c6783"/><rect x="9.2" y="3.2" width="2" height="7.2" fill="#5c6783"/><rect x="12" y="5.4" width="1.4" height="5" fill="#5c6783"/></svg><span class="ttl" style="left:33px">Day Parts</span></div>
<div id="dp"></div></div>
<div class="btn">Net Sales</div>
<div class="lnk" style="left:285px">Gross Sales</div>
<div class="lnk" style="left:370px">Labor Cost</div>
<svg class="abs" style="left:485px;top:714px" width="12" height="13" viewBox="0 0 12 13"><path d="M10.2 4.6 A4.6 4.6 0 0 0 2 3.5" fill="none" stroke="#2a9fdf" stroke-width="1.8"/><path d="M11.4 1 L11.4 5.6 L6.8 5.6Z" fill="#2a9fdf"/><path d="M1.8 8.4 A4.6 4.6 0 0 0 10 9.5" fill="none" stroke="#2a9fdf" stroke-width="1.8"/><path d="M0.6 12 L0.6 7.4 L5.2 7.4Z" fill="#2a9fdf"/></svg>
<div class="abs" style="left:0;top:0;width:1471px;height:822px;overflow:hidden;pointer-events:none">
<div class="abs dph" style="left:202.5px;top:743.3px;width:1268.5px;height:61.90000000000009px;border-radius:4px 0 0 0"></div>
<div class="abs" style="left:202.5px;top:805.2px;width:1268.5px;height:30.799999999999955px;background:#fff"></div>
<div class="abs" style="left:202.5px;top:773.9px;width:1268.5px;height:1px;background:#dcdcdc"></div>
<div class="abs" style="left:202.5px;top:804.7px;width:1268.5px;height:1px;background:#dcdcdc"></div>
<div class="abs" style="left:202.0px;top:742.8px;width:1277.5px;height:102.70000000000005px;border-left:1px solid #dcdcdc;border-top:1px solid #dcdcdc;border-top-left-radius:4px"></div>
<div class="abs" style="left:317.0px;top:743.3px;width:1px;height:92.70000000000005px;background:#dcdcdc"></div>
<div class="abs" style="left:390.0px;top:774.4px;width:1px;height:61.60000000000002px;background:#dcdcdc"></div>
<div class="abs" style="left:463.0px;top:743.3px;width:1px;height:92.70000000000005px;background:#dcdcdc"></div>
<div class="abs" style="left:537.0px;top:774.4px;width:1px;height:61.60000000000002px;background:#dcdcdc"></div>
<div class="abs" style="left:610.0px;top:743.3px;width:1px;height:92.70000000000005px;background:#dcdcdc"></div>
<div class="abs" style="left:685.0px;top:774.4px;width:1px;height:61.60000000000002px;background:#dcdcdc"></div>
<div class="abs" style="left:761.0px;top:743.3px;width:1px;height:92.70000000000005px;background:#dcdcdc"></div>
<div class="abs" style="left:838.0px;top:774.4px;width:1px;height:61.60000000000002px;background:#dcdcdc"></div>
<div class="abs" style="left:914.0px;top:743.3px;width:1px;height:92.70000000000005px;background:#dcdcdc"></div>
<div class="abs" style="left:988.0px;top:774.4px;width:1px;height:61.60000000000002px;background:#dcdcdc"></div>
<div class="abs" style="left:1061.0px;top:743.3px;width:1px;height:92.70000000000005px;background:#dcdcdc"></div>
<div class="abs" style="left:1134.0px;top:774.4px;width:1px;height:61.60000000000002px;background:#dcdcdc"></div>
<div class="abs" style="left:1207.0px;top:743.3px;width:1px;height:92.70000000000005px;background:#dcdcdc"></div>
<div class="abs" style="left:1285.0px;top:774.4px;width:1px;height:61.60000000000002px;background:#dcdcdc"></div>
<div class="abs" style="left:1361.0px;top:743.3px;width:1px;height:92.70000000000005px;background:#dcdcdc"></div>
<div class="abs" style="left:1434.0px;top:774.4px;width:1px;height:61.60000000000002px;background:#dcdcdc"></div>
<div class="abs" style="left:1508.0px;top:743.3px;width:1px;height:92.70000000000005px;background:#dcdcdc"></div>
<div class="abs dpt" style="left:324.5px;top:752.3px">Morning</div>
<div class="abs dpt" style="left:233.5px;width:150px;text-align:right;top:782.9px">Sales</div>
<div class="abs dpd" style="left:233.5px;width:150px;text-align:right;top:815.2px">$0</div>
<div class="abs dpt" style="left:306.5px;width:150px;text-align:right;top:782.9px">% Total</div>
<div class="abs dpd" style="left:306.5px;width:150px;text-align:right;top:815.2px">0.0%</div>
<div class="abs dpt" style="left:470.5px;top:752.3px">Early Morning</div>
<div class="abs dpt" style="left:380.5px;width:150px;text-align:right;top:782.9px">Sales</div>
<div class="abs dpd" style="left:380.5px;width:150px;text-align:right;top:815.2px">$0</div>
<div class="abs dpt" style="left:453.5px;width:150px;text-align:right;top:782.9px">% Total</div>
<div class="abs dpd" style="left:453.5px;width:150px;text-align:right;top:815.2px">0.0%</div>
<div class="abs dpt" style="left:617.5px;top:752.3px">Breakfast</div>
<div class="abs dpt" style="left:528.5px;width:150px;text-align:right;top:782.9px">Sales</div>
<div class="abs dpd" style="left:528.5px;width:150px;text-align:right;top:815.2px">$2,427</div>
<div class="abs dpt" style="left:604.5px;width:150px;text-align:right;top:782.9px">% Total</div>
<div class="abs dpd" style="left:604.5px;width:150px;text-align:right;top:815.2px">10.0%</div>
<div class="abs dpt" style="left:768.5px;top:752.3px">Lunch</div>
<div class="abs dpt" style="left:681.5px;width:150px;text-align:right;top:782.9px">Sales</div>
<div class="abs dpd" style="left:681.5px;width:150px;text-align:right;top:815.2px">$5,085</div>
<div class="abs dpt" style="left:757.5px;width:150px;text-align:right;top:782.9px">% Total</div>
<div class="abs dpd" style="left:757.5px;width:150px;text-align:right;top:815.2px">20.5%</div>
<div class="abs dpt" style="left:921.5px;top:752.3px">Late Lunch</div>
<div class="abs dpt" style="left:831.5px;width:150px;text-align:right;top:782.9px">Sales</div>
<div class="abs dpd" style="left:831.5px;width:150px;text-align:right;top:815.2px">$0</div>
<div class="abs dpt" style="left:904.5px;width:150px;text-align:right;top:782.9px">% Total</div>
<div class="abs dpd" style="left:904.5px;width:150px;text-align:right;top:815.2px">0.0%</div>
<div class="abs dpt" style="left:1068.5px;top:752.3px">Shoulder</div>
<div class="abs dpt" style="left:977.5px;width:150px;text-align:right;top:782.9px">Sales</div>
<div class="abs dpd" style="left:977.5px;width:150px;text-align:right;top:815.2px">$0</div>
<div class="abs dpt" style="left:1050.5px;width:150px;text-align:right;top:782.9px">% Total</div>
<div class="abs dpd" style="left:1050.5px;width:150px;text-align:right;top:815.2px">0.0%</div>
<div class="abs dpt" style="left:1214.5px;top:752.3px">Dinner</div>
<div class="abs dpt" style="left:1128.5px;width:150px;text-align:right;top:782.9px">Sales</div>
<div class="abs dpd" style="left:1128.5px;width:150px;text-align:right;top:815.2px">$16,686</div>
<div class="abs dpt" style="left:1204.5px;width:150px;text-align:right;top:782.9px">% Total</div>
<div class="abs dpd" style="left:1204.5px;width:150px;text-align:right;top:815.2px">66.5%</div>
<div class="abs dpt" style="left:1368.5px;top:752.3px">Late Night</div>
<div class="abs dpt" style="left:1277.5px;width:150px;text-align:right;top:782.9px">Sales</div>
<div class="abs dpd" style="left:1277.5px;width:150px;text-align:right;top:815.2px">$0</div>
<div class="abs dpt" style="left:1351.5px;width:150px;text-align:right;top:782.9px">% Total</div>
<div class="abs dpd" style="left:1351.5px;width:150px;text-align:right;top:815.2px">0.0%</div>
<div class="abs dpd" style="left:211px;top:815.2px">Total Scheduled</div>
</div>
<div class="wm">SoftwareSuggest<span style="font-size:28px;letter-spacing:0.5px">.com</span></div>
<div id="sidebar" class="abs">
  <div id="user" class="abs">
    <div class="abs" style="left:11.5px;top:11px;font-size:12px;font-weight:bold;color:#e97f68;line-height:14px;letter-spacing:-0.15px">Jose Sermeno</div>
    <div class="abs" style="left:13px;top:29px;font-size:10px;color:#fff;line-height:12px">
      <svg width="8" height="9" viewBox="0 0 8 9" style="vertical-align:-1px"><circle cx="4" cy="2.4" r="2.2" fill="#fff"/><path d="M0 9 C0 5 1.5 4.6 4 4.6 C6.5 4.6 8 5 8 9Z" fill="#fff"/></svg>
      <span style="letter-spacing:-0.2px;margin-left:-1px">My Account</span></div>
    <div class="abs" style="left:12px;top:47px;font-size:10px;color:#f2cf7a;line-height:12px">
      <svg width="11" height="9" viewBox="0 0 11 9" style="vertical-align:-1px"><circle cx="2.5" cy="2.5" r="1.6" fill="#f2cf7a"/><circle cx="8.5" cy="2.5" r="1.6" fill="#f2cf7a"/><circle cx="5.5" cy="3" r="2" fill="#f2cf7a"/><path d="M0 8 C0 5 1 4.5 2.5 4.5 C3.5 4.5 4 5 4 8Z M7 8 C7 5 7.5 4.5 8.5 4.5 C10 4.5 11 5 11 8Z M2.5 9 C2.5 6 3.5 5.3 5.5 5.3 C7.5 5.3 8.5 6 8.5 9Z" fill="#f2cf7a"/></svg>
      <span style="display:inline-block;transform:scaleX(0.83);transform-origin:0 50%">BRINK SALES</span></div>
  </div>
<div class="menu" style="top:64px"><svg class="ic" style="top:10px" width="14.2" height="11.5" viewBox="0 0 15 12" preserveAspectRatio="none"><path d="M3.2 11.2 C1.3 11.2 0.3 10 0.3 8.5 C0.3 7 1.4 6 2.6 5.9 C2.7 3.6 4.4 1.3 7.2 1.3 C9.3 1.3 10.8 2.6 11.3 4.3 C13.3 4.3 14.7 5.9 14.7 7.8 C14.7 9.8 13.2 11.2 11.4 11.2 Z" fill="#fff"/></svg><span class="t" style="left:30.5px">Admin</span><svg class="chev" width="11" height="13" viewBox="0 0 11 13"><path d="M3 1.5 L8.2 6.5 L3 11.5" stroke="#fff" stroke-width="2.6" fill="none" stroke-linecap="butt" stroke-linejoin="miter"/></svg></div>
<div class="menu" style="top:96px;background-image:none"><svg class="ic" style="top:13px" width="13.2" height="10.4" viewBox="0 0 14 11" preserveAspectRatio="none"><path d="M0.3 10.6 C0.1 10 0 9.2 0 8.3 C0 4 3.1 0.7 7 0.7 C10.9 0.7 14 4 14 8.3 C14 9.2 13.9 10 13.7 10.6 Z" fill="#fff"/><circle cx="2.3" cy="8.1" r="1" fill="#2a2b30"/><circle cx="3.4" cy="4.3" r="1" fill="#2a2b30"/><circle cx="7" cy="2.8" r="1" fill="#2a2b30"/><circle cx="10.6" cy="4.3" r="1" fill="#2a2b30"/><circle cx="11.7" cy="8.1" r="1" fill="#2a2b30"/><path d="M6 9.4 L8.6 3.6 L8 9.4 Z" fill="#2a2b30"/><circle cx="7" cy="9.2" r="1.3" fill="#2a2b30"/></svg><span class="t" style="left:29px">Home</span><svg class="chev" style="left:146px;top:11px" width="13" height="10" viewBox="0 0 13 10"><path d="M1.5 2.2 L6.5 7.2 L11.5 2.2" stroke="#fff" stroke-width="2.6" fill="none"/></svg></div>
<div class="menu" style="top:205px"><svg class="ic" style="top:12px" width="14" height="11" viewBox="0 0 14 12" preserveAspectRatio="none"><rect x="0.8" y="0.8" width="12.4" height="10.4" rx="1.5" fill="none" stroke="#fff" stroke-width="1.6"/><rect x="3" y="6.5" width="1.8" height="3" fill="#fff"/><rect x="5.6" y="4.5" width="1.8" height="5" fill="#fff"/><rect x="8.2" y="3" width="1.8" height="6.5" fill="#fff"/><rect x="10.4" y="5" width="1.2" height="4.5" fill="#fff"/></svg><span class="t" style="left:29.5px">Reports</span><svg class="chev" width="11" height="13" viewBox="0 0 11 13"><path d="M3 1.5 L8.2 6.5 L3 11.5" stroke="#fff" stroke-width="2.6" fill="none" stroke-linecap="butt" stroke-linejoin="miter"/></svg></div>
<div class="menu" style="top:238px"><svg class="ic" style="top:12px" width="12" height="12" viewBox="0 0 12 12"><g fill="#fff"><circle cx="6" cy="6" r="4.2"/><rect x="4.8" y="0" width="2.4" height="12"/><rect x="0" y="4.8" width="12" height="2.4"/><rect x="4.8" y="0" width="2.4" height="12" transform="rotate(45 6 6)"/><rect x="4.8" y="0" width="2.4" height="12" transform="rotate(-45 6 6)"/></g><circle cx="6" cy="6" r="1.8" fill="#2a2b30"/></svg><span class="t" style="left:27.5px">Configuration</span><svg class="chev" width="11" height="13" viewBox="0 0 11 13"><path d="M3 1.5 L8.2 6.5 L3 11.5" stroke="#fff" stroke-width="2.6" fill="none" stroke-linecap="butt" stroke-linejoin="miter"/></svg></div>
<div class="menu" style="top:271px"><svg class="ic" style="top:12px" width="11" height="13" viewBox="0 0 11 13"><path d="M0.5 0.5 L1.6 0.5 L1.6 4 L2.3 4 L2.3 0.5 L3.3 0.5 L3.3 4 L4 4 L4 0.5 L5 0.5 L5 5.2 C5 6 4.4 6.4 3.6 6.6 L3.8 12.5 L1.6 12.5 L1.8 6.6 C1 6.4 0.5 6 0.5 5.2 Z" fill="#fff"/><path d="M7 0.3 C9 0.3 10.3 2 10.3 5 L10.3 12.5 L8.2 12.5 L8.2 7.6 L7 7.6 Z" fill="#fff"/></svg><span class="t" style="left:27px">Orders</span><svg class="chev" width="11" height="13" viewBox="0 0 11 13"><path d="M3 1.5 L8.2 6.5 L3 11.5" stroke="#fff" stroke-width="2.6" fill="none" stroke-linecap="butt" stroke-linejoin="miter"/></svg></div>
<div class="menu" style="top:304px"><svg class="ic" style="top:12px" width="13" height="12" viewBox="0 0 13 12"><path d="M6.5 0.2 L8.4 4 L12.7 4.5 L9.5 7.4 L10.4 11.7 L6.5 9.6 L2.6 11.7 L3.5 7.4 L0.3 4.5 L4.6 4 Z" fill="#fff"/></svg><span class="t" style="left:28px">Labor</span><svg class="chev" width="11" height="13" viewBox="0 0 11 13"><path d="M3 1.5 L8.2 6.5 L3 11.5" stroke="#fff" stroke-width="2.6" fill="none" stroke-linecap="butt" stroke-linejoin="miter"/></svg></div>
<div class="menu" style="top:337px"><svg class="ic" style="top:12px" width="13" height="12" viewBox="0 0 13 12"><path d="M6.5 11.5 L1.3 6.4 C-0.3 4.8 0 1.6 2.3 0.8 C4 0.2 5.6 1 6.5 2.3 C7.4 1 9 0.2 10.7 0.8 C13 1.6 13.3 4.8 11.7 6.4 Z" fill="#fff"/></svg><span class="t" style="left:29.5px">Guests</span><svg class="chev" width="11" height="13" viewBox="0 0 11 13"><path d="M3 1.5 L8.2 6.5 L3 11.5" stroke="#fff" stroke-width="2.6" fill="none" stroke-linecap="butt" stroke-linejoin="miter"/></svg></div>
<div class="menu" style="top:370px"><svg class="ic" style="top:13px" width="14" height="10" viewBox="0 0 15 11" preserveAspectRatio="none"><rect x="0.8" y="0.8" width="13.4" height="9.4" fill="none" stroke="#fff" stroke-width="1.6"/><path d="M0.8 3.2 A2.4 2.4 0 0 0 3.2 0.8 M11.8 0.8 A2.4 2.4 0 0 0 14.2 3.2 M14.2 7.8 A2.4 2.4 0 0 0 11.8 10.2 M3.2 10.2 A2.4 2.4 0 0 0 0.8 7.8" fill="#fff" stroke="#fff" stroke-width="1.2"/><ellipse cx="7.5" cy="5.5" rx="2.8" ry="3.3" fill="#fff"/><rect x="7" y="3.5" width="1" height="4" fill="#2a2b30"/></svg><span class="t" style="left:30px">Accounting</span><svg class="chev" width="11" height="13" viewBox="0 0 11 13"><path d="M3 1.5 L8.2 6.5 L3 11.5" stroke="#fff" stroke-width="2.6" fill="none" stroke-linecap="butt" stroke-linejoin="miter"/></svg></div>
<div class="menu" style="top:403px"><svg class="ic" style="top:11px" width="14" height="13" viewBox="0 0 14 13"><path d="M9.5 7.5 L9.5 11.3 L1.2 11.3 L1.2 3.5 L4 3.5" fill="none" stroke="#fff" stroke-width="1.6"/><path d="M4.2 9 C4.2 5.5 6.5 3.8 9.5 3.8 L9.5 1.2 L13.6 4.8 L9.5 8.4 L9.5 5.9 C7.4 5.9 5.6 6.6 4.2 9 Z" fill="#fff"/></svg><span class="t" style="left:28px">Export</span><svg class="chev" width="11" height="13" viewBox="0 0 11 13"><path d="M3 1.5 L8.2 6.5 L3 11.5" stroke="#fff" stroke-width="2.6" fill="none" stroke-linecap="butt" stroke-linejoin="miter"/></svg></div>
<div class="menu" style="top:436px"><svg class="ic" style="top:12px" width="13" height="13" viewBox="0 0 13 13"><path d="M1.3 12.6 C0.8 12.6 0.4 12.2 0.4 11.7 C0.4 11.4 0.5 11.2 0.7 11 L5.9 5.8 C5.6 5.2 5.5 4.6 5.5 4 C5.5 1.9 7.2 0.2 9.3 0.2 C9.9 0.2 10.5 0.4 11 0.6 L8.4 3.2 L8.9 4.6 L10.3 5.1 L12.9 2.5 C13.1 3 13.2 3.5 13.2 4.1 C13.2 6.2 11.5 7.9 9.4 7.9 C8.8 7.9 8.2 7.8 7.7 7.5 L2.5 12.5 C2.3 12.7 2 12.6 1.3 12.6 Z" fill="#fff"/></svg><span class="t" style="left:28.5px">Tools</span><svg class="chev" width="11" height="13" viewBox="0 0 11 13"><path d="M3 1.5 L8.2 6.5 L3 11.5" stroke="#fff" stroke-width="2.6" fill="none" stroke-linecap="butt" stroke-linejoin="miter"/></svg></div>
<div class="menu" style="top:469px"><svg class="ic" style="top:12px" width="12" height="12" viewBox="0 0 12 12"><circle cx="6" cy="6" r="5.8" fill="#fff"/><path d="M4 4.5 C4 3.2 5 2.5 6.1 2.5 C7.3 2.5 8.2 3.3 8.2 4.3 C8.2 5.6 6.8 5.7 6.8 6.9 L5.3 6.9 C5.3 5.2 6.6 5.2 6.6 4.4 C6.6 4 6.4 3.8 6 3.8 C5.6 3.8 5.4 4.1 5.4 4.6 Z" fill="#2a2b30"/><rect x="5.3" y="7.7" width="1.5" height="1.5" fill="#2a2b30"/></svg><span class="t" style="left:27px">Help</span><svg class="chev" width="11" height="13" viewBox="0 0 11 13"><path d="M3 1.5 L8.2 6.5 L3 11.5" stroke="#fff" stroke-width="2.6" fill="none" stroke-linecap="butt" stroke-linejoin="miter"/></svg></div>
<div class="abs" style="left:0;top:98px;width:2px;height:31px;background:#8fd3f5"></div>
<div class="sub"><div class="abs" style="left:0;top:7px;width:2px;height:30px;background:#6a6b70"></div><span class="t" style="top:16px">Dashboard</span><span class="t" style="top:46px">Devices</span></div>
</div>
<div class="abs" style="left:173px;top:238px;width:563px;height:52px;border:4px solid #fb0000;box-shadow:2px 2px 3px rgba(0,0,0,0.65), inset 2px 2px 3px rgba(0,0,0,0.65)"></div>
<div id="leftstrip" class="abs"></div>
<div id="botstrip" class="abs"></div>
</body></html>
